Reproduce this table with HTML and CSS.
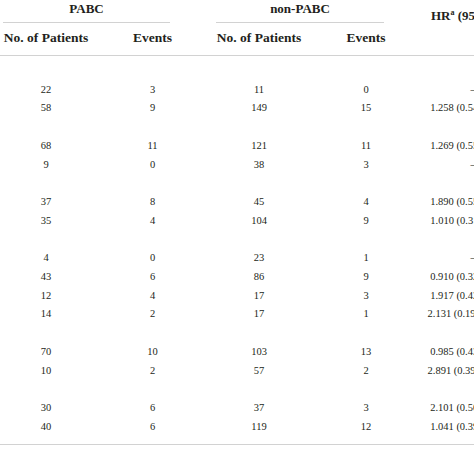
FILE: index.html
```html
<!DOCTYPE html>
<html>
<head>
<meta charset="utf-8">
<link rel="stylesheet" href="styles.css">
</head>
<body>
<div class="table">
  <div class="head">
    <div class="group g1">PABC</div>
    <div class="group g2">non-PABC</div>
    <div class="hr"><span>HR<sup>a</sup> (95% CI)</span></div>
    <div class="sub">No. of Patients</div>
    <div class="sub">Events</div>
    <div class="sub">No. of Patients</div>
    <div class="sub">Events</div>
  </div>
  <div class="body">
    <div class="row blank"></div>
    <div class="row"><span>22</span><span>3</span><span>11</span><span>0</span><span>–</span></div>
    <div class="row"><span>58</span><span>9</span><span>149</span><span>15</span><span>1.258 (0.543–2.915)</span></div>
    <div class="row blank"></div>
    <div class="row"><span>68</span><span>11</span><span>121</span><span>11</span><span>1.269 (0.556–2.896)</span></div>
    <div class="row"><span>9</span><span>0</span><span>38</span><span>3</span><span>–</span></div>
    <div class="row blank"></div>
    <div class="row"><span>37</span><span>8</span><span>45</span><span>4</span><span>1.890 (0.553–6.459)</span></div>
    <div class="row"><span>35</span><span>4</span><span>104</span><span>9</span><span>1.010 (0.311–3.282)</span></div>
    <div class="row blank"></div>
    <div class="row"><span>4</span><span>0</span><span>23</span><span>1</span><span>–</span></div>
    <div class="row"><span>43</span><span>6</span><span>86</span><span>9</span><span>0.910 (0.323–2.565)</span></div>
    <div class="row"><span>12</span><span>4</span><span>17</span><span>3</span><span>1.917 (0.428–8.580)</span></div>
    <div class="row"><span>14</span><span>2</span><span>17</span><span>1</span><span>2.131 (0.193–23.524)</span></div>
    <div class="row blank"></div>
    <div class="row"><span>70</span><span>10</span><span>103</span><span>13</span><span>0.985 (0.431–2.251)</span></div>
    <div class="row"><span>10</span><span>2</span><span>57</span><span>2</span><span>2.891 (0.390–21.404)</span></div>
    <div class="row blank"></div>
    <div class="row"><span>30</span><span>6</span><span>37</span><span>3</span><span>2.101 (0.502–8.795)</span></div>
    <div class="row"><span>40</span><span>6</span><span>119</span><span>12</span><span>1.041 (0.394–2.751)</span></div>
  </div>
</div>
</body>
</html>
```

FILE: styles.css
```css
html, body {
  margin: 0;
  padding: 0;
  background: #ffffff;
  overflow: hidden;
  width: 474px;
  height: 474px;
}

.table {
  width: 640px;
  font-family: "Liberation Serif", "Times New Roman", serif;
  color: #231f20;
}

.head {
  display: grid;
  grid-template-columns: 86px 35px 86px 36px 86px;
  column-gap: 46px;
  padding-left: 3px;
  border-bottom: 1px solid #d2d2d2;
  font-weight: bold;
  font-size: 13.5px;
}

.group {
  grid-row: 1;
  line-height: 18px;
  height: 18px;
  padding-bottom: 4px;
  border-bottom: 1px solid #d2d2d2;
  text-align: center;
  font-size: 13px;
}

.g1 { grid-column: 1 / 3; }
.g2 { grid-column: 3 / 5; }

.hr {
  grid-column: 5;
  grid-row: 1 / 3;
  line-height: 18px;
  padding-top: 7px;
  padding-left: 1px;
  white-space: nowrap;
  font-size: 13px;
}

.hr sup {
  font-size: 8px;
  line-height: 0;
  vertical-align: 5px;
}

.sub {
  grid-row: 2;
  line-height: 18px;
  padding-top: 6px;
  padding-bottom: 8px;
  display: flex;
  justify-content: center;
  white-space: nowrap;
}

.body {
  padding-top: 6px;
  padding-bottom: 8px;
  border-bottom: 1px solid #d2d2d2;
  font-size: 10.5px;
}

.row {
  display: grid;
  grid-template-columns: 86px 35px 86px 36px 86px;
  column-gap: 46px;
  padding-left: 3px;
  height: 18.72px;
  line-height: 18.72px;
}

.row span {
  display: flex;
  justify-content: center;
  white-space: nowrap;
}
```
